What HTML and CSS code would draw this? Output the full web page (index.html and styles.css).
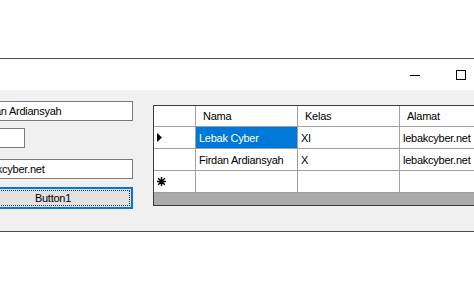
FILE: index.html
```html
<!DOCTYPE html>
<html lang="id">
<head>
  <meta charset="UTF-8">
  <title>Form1</title>
  <link rel="stylesheet" href="styles.css">
</head>
<body>

<div class="window">
  <div class="titlebar">
    <span class="ctl">
      <svg width="10" height="10" viewBox="0 0 10 10"><path d="M0 5.5h10" stroke="#000" stroke-width="1"/></svg>
    </span>
    <span class="ctl">
      <svg width="10" height="10" viewBox="0 0 10 10"><rect x="0.5" y="0.5" width="9" height="9" fill="none" stroke="#000" stroke-width="1"/></svg>
    </span>
    <span class="ctl">
      <svg width="10" height="10" viewBox="0 0 10 10"><path d="M0 0L10 10M10 0L0 10" stroke="#000" stroke-width="1"/></svg>
    </span>
  </div>

  <div class="client">
    <div class="fields">
      <div class="textbox">Firdan Ardiansyah</div>
      <div class="textbox short">XI</div>
      <div class="textbox wide-gap">lebakcyber.net</div>
      <div class="btn"><span>Button1</span></div>
    </div>

    <div class="grid">
      <div class="rows">
        <div class="cell rowhdr"></div>
        <div class="cell head">Nama</div>
        <div class="cell head">Kelas</div>
        <div class="cell head">Alamat</div>

        <div class="cell rowhdr">
          <svg width="5" height="9" viewBox="0 0 5 9"><path d="M0 0L5 4.5L0 9Z" fill="#000"/></svg>
        </div>
        <div class="cell selected">Lebak Cyber</div>
        <div class="cell">XI</div>
        <div class="cell">lebakcyber.net</div>

        <div class="cell rowhdr"></div>
        <div class="cell">Firdan Ardiansyah</div>
        <div class="cell">X</div>
        <div class="cell">lebakcyber.net</div>

        <div class="cell rowhdr">
          <svg width="9" height="9" viewBox="0 0 9 9"><path d="M4.5 0v9M0 4.5h9M1.2 1.2l6.6 6.6M7.8 1.2l-6.6 6.6" stroke="#000" stroke-width="1.4"/></svg>
        </div>
        <div class="cell"></div>
        <div class="cell"></div>
        <div class="cell"></div>
      </div>
      <div class="workspace"></div>
    </div>
  </div>
</div>

</body>
</html>
```

FILE: styles.css
```css
body {
  margin: 0;
  background: #fff;
  font-family: "Liberation Sans", Arial, sans-serif;
  font-size: 11px;
  letter-spacing: -0.25px;
  color: #000;
  overflow: hidden;
}

.window {
  width: 569px;
  margin: 58px 0 0 -40px;
  border: 1px solid #4d4d4d;
  background: #f0f0f0;
}

.titlebar {
  height: 31px;
  background: #fff;
  display: flex;
  justify-content: flex-end;
}

.ctl {
  width: 46px;
  display: flex;
  align-items: center;
  justify-content: center;
}

.client {
  height: 141px;
  box-sizing: border-box;
  padding: 11px 12px 0 12px;
  display: flex;
  align-items: flex-start;
  gap: 20px;
}

.fields {
  width: 160px;
  display: flex;
  flex-direction: column;
}

.textbox {
  height: 20px;
  box-sizing: border-box;
  border: 1px solid #7a7a7a;
  background: #fff;
  padding: 0 3px;
  line-height: 18px;
  white-space: nowrap;
  overflow: hidden;
  margin-bottom: 7px;
}

.textbox.short {
  width: 52px;
  margin-bottom: 11px;
}

.textbox.wide-gap {
  margin-bottom: 8px;
}

.btn {
  height: 22px;
  box-sizing: border-box;
  border: 2px solid #0078d7;
  background: #e1e1e1;
  padding: 1px;
  display: flex;
}

.btn span {
  flex: 1;
  border: 1px dotted #333;
  display: flex;
  align-items: center;
  justify-content: center;
}

.grid {
  flex: 1;
  margin-top: 4px;
  border: 1px solid #3c3c3c;
  background: #ababab;
}

.rows {
  display: grid;
  grid-template-columns: 42px 102px 102px 1fr;
  grid-template-rows: 21px 22px 22px 22px;
  background: #fff;
}

.cell {
  border-right: 1px solid #a0a0a0;
  border-bottom: 1px solid #a0a0a0;
  padding-left: 3px;
  display: flex;
  align-items: center;
  white-space: nowrap;
  overflow: hidden;
}

.cell.head {
  padding-left: 7px;
}

.cell.rowhdr {
  padding-left: 3px;
}

.cell.selected {
  background: #0078d7;
  color: #fff;
}

.workspace {
  height: 12px;
}
```
